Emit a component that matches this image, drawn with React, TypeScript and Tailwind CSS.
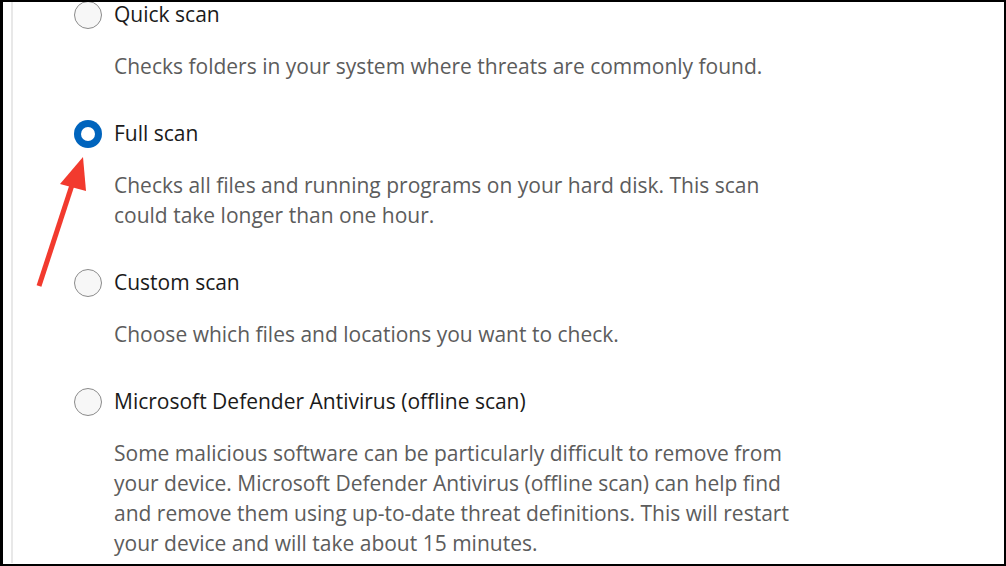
import React from 'react';

interface ScanOption {
    id: string;
    title: string;
    description: string;
}

const OPTIONS: ScanOption[] = [
    {
        id: 'quick',
        title: 'Quick scan',
        description: 'Checks folders in your system where threats are commonly found.',
    },
    {
        id: 'full',
        title: 'Full scan',
        description:
            'Checks all files and running programs on your hard disk. This scan could take longer than one hour.',
    },
    {
        id: 'custom',
        title: 'Custom scan',
        description: 'Choose which files and locations you want to check.',
    },
    {
        id: 'offline',
        title: 'Microsoft Defender Antivirus (offline scan)',
        description:
            'Some malicious software can be particularly difficult to remove from your device. Microsoft Defender Antivirus (offline scan) can help find and remove them using up-to-date threat definitions. This will restart your device and will take about 15 minutes.',
    },
];

function Radio({ checked }: { checked: boolean }) {
    if (checked) {
        return (
            <span className="flex h-[28px] w-[28px] shrink-0 items-center justify-center rounded-full bg-[#0064bd]">
                <span className="h-[14px] w-[14px] rounded-full bg-white"></span>
            </span>
        );
    }
    return <span className="h-[28px] w-[28px] shrink-0 rounded-full border border-[#8b8b8b] bg-[#f7f7f7]"></span>;
}

function Arrow() {
    return (
        <svg className="pointer-events-none absolute left-0 top-0" width="120" height="300" viewBox="0 0 120 300">
            <line x1="36" y1="284" x2="70" y2="180" stroke="#f23a2e" strokeWidth="5" strokeLinecap="butt" />
            <polygon points="80,155 57,182 83,189" fill="#f23a2e" />
        </svg>
    );
}

export default function App() {
    const selected = 'full';

    return (
        <div
            className="relative h-[566px] w-[1006px] overflow-hidden border-b-2 border-l-[3px] border-r-2 border-t-2 border-black bg-white"
            style={{ fontFamily: '"Open Sans", "Noto Sans", sans-serif' }}
        >
            <div className="ml-[8px] h-full border-l-2 border-[#e8e8e8] pl-[61px]">
                <div className="-mt-[1px] flex flex-col gap-[39px]">
                    {OPTIONS.map((opt) => (
                        <div key={opt.id}>
                            <div className="flex h-[28px] items-center gap-[12px]">
                                <Radio checked={opt.id === selected} />
                                <span className="text-[21px] text-[#1a1a1a]">{opt.title}</span>
                            </div>
                            <p className="mt-[22px] w-[740px] pl-[40px] text-[21px] leading-[30px] text-[#5c5c5c]">
                                {opt.description}
                            </p>
                        </div>
                    ))}
                </div>
            </div>
            <Arrow />
        </div>
    );
}
